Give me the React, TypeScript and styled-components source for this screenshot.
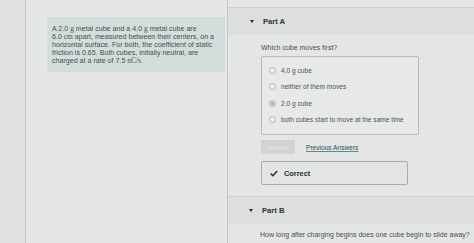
import styled, { createGlobalStyle } from "styled-components";

const Global = createGlobalStyle`
  html, body {
    margin: 0;
    padding: 0;
    background: #e3e6e4;
  }
  body {
    font-family: "Liberation Sans", Arial, sans-serif;
    color: #3a3d3c;
  }
`;

const Page = styled.div`
  display: flex;
  width: 474px;
  height: 243px;
  overflow: hidden;
`;

const Gutter = styled.div`
  width: 25px;
  background: #dfe2e0;
  border-right: 1px solid #bfc3c1;
`;

const ProblemColumn = styled.div`
  width: 202px;
  padding: 17px 0 0 21px;
  box-sizing: border-box;
  background: #e4e7e5;
  border-right: 1px solid #c4c8c6;
`;

const ProblemBox = styled.div`
  width: 178px;
  height: 55px;
  box-sizing: border-box;
  background: #d3dddc;
  padding: 8px 0 0 5px;
  font-size: 7.1px;
  line-height: 8px;
  white-space: nowrap;
  color: #4a4e4d;
`;

const Unit = styled.span`
  font-family: "Liberation Serif", "Times New Roman", serif;
  font-size: 7.4px;
  line-height: 7px;
`;

const RightColumn = styled.div`
  flex: 1;
  padding-top: 7px;
  display: flex;
  flex-direction: column;
`;

const PartHeader = styled.div<{ $top?: number }>`
  height: 27px;
  margin-top: ${({ $top }) => $top ?? 0}px;
  display: flex;
  align-items: center;
  padding-left: ${({ $top }) => ($top ? 21 : 22)}px;
  gap: 9px;
  background: #dcdfdd;
  border-top: 1px solid #cdd0ce;
  font-size: 7.6px;
  font-weight: bold;
  color: #2f3231;
`;

const Caret = styled.span`
  width: 0;
  height: 0;
  border-left: 2.5px solid transparent;
  border-right: 2.5px solid transparent;
  border-top: 3px solid #2a2d2c;
`;

const Section = styled.div`
  padding-left: 33px;
`;

const Question = styled.div`
  font-size: 7px;
  margin-top: 9px;
  color: #4a4e4d;
`;

const OptionsBox = styled.div`
  width: 158px;
  height: 79px;
  box-sizing: border-box;
  margin-top: 5px;
  border: 1px solid #b6bab8;
  border-radius: 2px;
  background: #e6e9e7;
  padding: 9px 0 0 7px;
  display: flex;
  flex-direction: column;
  gap: 8.5px;
`;

const Option = styled.div`
  display: flex;
  align-items: center;
  gap: 5px;
  height: 8px;
  font-size: 6.6px;
  color: #4e5250;
`;

const Radio = styled.span<{ $checked?: boolean }>`
  width: 5px;
  height: 5px;
  border-radius: 50%;
  border: 1px solid #b4b8b6;
  background: ${({ $checked }) => ($checked ? "#a8acaa" : "#eceeed")};
  box-shadow: ${({ $checked }) => ($checked ? "inset 0 0 0 1px #e2e5e3" : "none")};
`;

const Actions = styled.div`
  display: flex;
  align-items: center;
  gap: 11px;
  margin-top: 5px;
`;

const SubmitButton = styled.div`
  width: 34px;
  height: 14px;
  background: #d0d3d2;
  color: #e2e4e3;
  font-size: 6.8px;
  display: flex;
  align-items: center;
  justify-content: center;
`;

const PrevLink = styled.span`
  font-size: 6.6px;
  color: #2c4d58;
  text-decoration: underline;
  text-decoration-color: #5b8895;
`;

const CorrectBox = styled.div`
  width: 147px;
  height: 24px;
  box-sizing: border-box;
  margin-top: 7px;
  border: 1px solid #a9adab;
  border-radius: 2px;
  background: #e2e5e3;
  display: flex;
  align-items: center;
  gap: 6px;
  padding-left: 8px;
  font-size: 7.4px;
  font-weight: bold;
  color: #2d302f;
`;

const Prompt = styled.div`
  font-size: 7px;
  color: #4a4e4d;
  padding-left: 32px;
  margin-top: 7px;
`;

export default function App() {
  return (
    <>
      <Global />
      <Page>
        <Gutter />
        <ProblemColumn>
          <ProblemBox>
            A 2.0 <Unit>g</Unit> metal cube and a 4.0 <Unit>g</Unit> metal cube are
            <br />
            6.0 <Unit>cm</Unit> apart, measured between their centers, on a
            <br />
            horizontal surface. For both, the coefficient of static
            <br />
            friction is 0.65. Both cubes, initially neutral, are
            <br />
            charged at a rate of 7.5 <Unit>nC/s</Unit>.
          </ProblemBox>
        </ProblemColumn>
        <RightColumn>
          <PartHeader>
            <Caret />
            Part A
          </PartHeader>
          <Section>
            <Question>Which cube moves first?</Question>
            <OptionsBox>
              <Option>
                <Radio />
                4.0 g cube
              </Option>
              <Option>
                <Radio />
                neither of them moves
              </Option>
              <Option>
                <Radio $checked />
                2.0 g cube
              </Option>
              <Option>
                <Radio />
                both cubes start to move at the same time
              </Option>
            </OptionsBox>
            <Actions>
              <SubmitButton>Submit</SubmitButton>
              <PrevLink>Previous Answers</PrevLink>
            </Actions>
            <CorrectBox>
              <svg width="8" height="7" viewBox="0 0 8 7">
                <path d="M0.8 3.6 L2.9 5.7 L7.2 1" fill="none" stroke="#2d302f" strokeWidth="1.6" />
              </svg>
              Correct
            </CorrectBox>
          </Section>
          <PartHeader $top={11}>
            <Caret />
            Part B
          </PartHeader>
          <Prompt>How long after charging begins does one cube begin to slide away?</Prompt>
        </RightColumn>
      </Page>
    </>
  );
}
